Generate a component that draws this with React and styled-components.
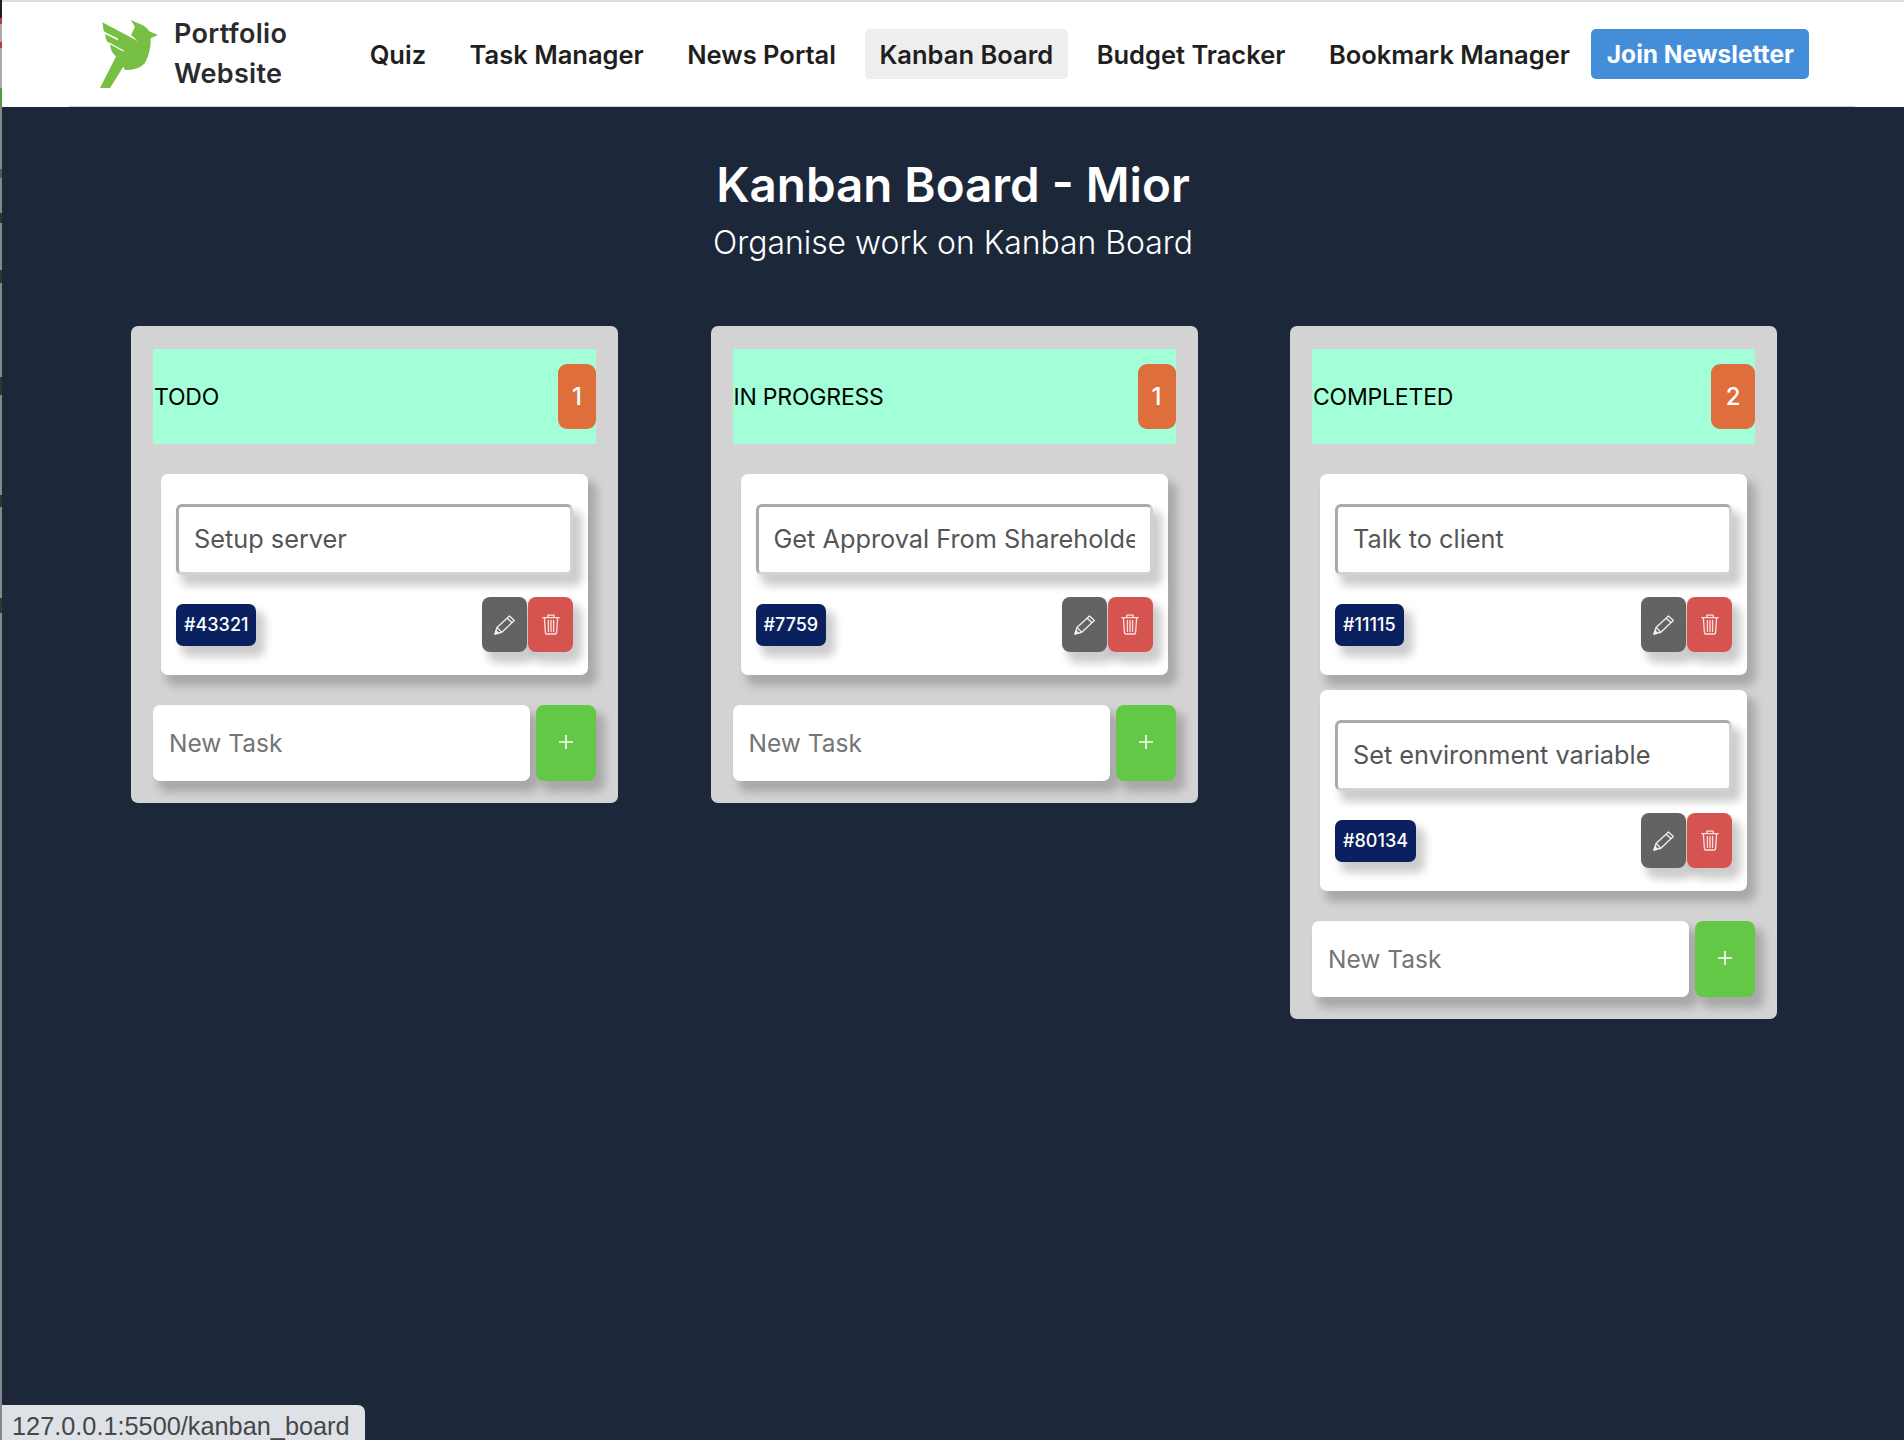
import React from "react";
import styled, { createGlobalStyle } from "styled-components";

const GlobalStyle = createGlobalStyle`
  html, body {
    margin: 0;
    padding: 0;
    background-color: #1c2839;
  }
  * {
    box-sizing: border-box;
  }
`;

const softShadow = "7px 9px 8px 2px rgba(0, 0, 0, 0.2)";

const Shell = styled.div`
  display: flex;
  width: 1904px;
  height: 1440px;
  overflow: hidden;
  font-family: Inter, "Noto Sans", sans-serif;
`;

const EdgeStrip = styled.div`
  flex: 0 0 2px;
  background: linear-gradient(
    to bottom,
    #1d1d22 0 18px,
    #b5403f 18px 24px,
    #a9a9a9 24px 42px,
    #b5403f 42px 48px,
    #a9a9a9 48px 88px,
    #4d9c43 88px 107px,
    #84878c 107px 169px,
    #55575b 169px 178px,
    #84878c 178px 213px,
    #333 213px 223px,
    #84878c 223px 270px,
    #333 270px 283px,
    #84878c 283px 377px,
    #333 377px 395px,
    #84878c 395px 495px,
    #333 495px 507px,
    #84878c 507px 598px,
    #333 598px 613px,
    #84878c 613px
  );
`;

const Main = styled.div`
  flex: 1;
  min-width: 0;
`;

const TopBar = styled.header`
  background-color: #fff;
  border-top: 2px solid #dcdcdc;
  height: 107px;
`;

const NavInner = styled.nav`
  display: flex;
  align-items: center;
  height: 100%;
  margin: 0 49px 0 67px;
  padding-left: 31px;
  border-bottom: 1px solid #cfcfcf;
`;

const Brand = styled.div`
  display: flex;
  align-items: center;
  gap: 14px;
  margin-right: 68px;
`;

const BrandName = styled.div`
  font-size: 27px;
  font-weight: 600;
  line-height: 40px;
  color: #2b2a2d;
  letter-spacing: 0.3px;
`;

const NavLinks = styled.ul`
  display: flex;
  align-items: center;
  gap: 14.5px;
  list-style: none;
  margin: 0;
  padding: 0;
`;

const NavItem = styled.li`
  height: 50px;
  padding: 0 14.5px;
  display: flex;
  align-items: center;
  border-radius: 5px;
  font-size: 25.5px;
  font-weight: 600;
  color: #1f1e20;
  white-space: nowrap;
  background-color: ${(p) => (p.$active ? "#eeeeee" : "transparent")};
`;

const JoinButton = styled.button`
  height: 50px;
  width: 218px;
  margin-left: 7px;
  padding: 0;
  border: none;
  border-radius: 5px;
  background-color: #448ed9;
  color: #fff;
  font-family: inherit;
  font-size: 24.5px;
  font-weight: 700;
  white-space: nowrap;
`;

const Heading = styled.div`
  text-align: center;
  color: #fff;
  padding-top: 49px;
`;

const Title = styled.h1`
  margin: 0;
  font-size: 47.5px;
  font-weight: 600;
  line-height: 58px;
`;

const Subtitle = styled.p`
  margin: 9px 0 0;
  font-size: 31.9px;
  font-weight: 300;
  line-height: 40px;
`;

const Board = styled.div`
  display: flex;
  align-items: flex-start;
  justify-content: center;
  gap: 92.5px;
  margin-top: 63px;
  padding-left: 2px;
`;

const Column = styled.section`
  width: 487px;
  padding: 23px 22px 22px;
  background-color: #d3d3d3;
  border-radius: 7px;
`;

const ColumnHeader = styled.div`
  display: flex;
  align-items: center;
  justify-content: space-between;
  height: 95px;
  padding-left: 1px;
  background-color: #a2ffd7;
  font-size: 23px;
  letter-spacing: -0.2px;
  color: #000;
`;

const Count = styled.span`
  display: flex;
  align-items: center;
  justify-content: center;
  width: ${(p) => (p.$wide ? "44px" : "38px")};
  height: 65px;
  border-radius: 9px;
  background-color: #de6e3b;
  color: #fff;
  font-size: 24px;
  font-weight: 500;
`;

const CardList = styled.div`
  display: flex;
  flex-direction: column;
  gap: 15px;
  margin: 30px 8px;
`;

const Card = styled.article`
  padding: 30px 15px 23px;
  background-color: #fff;
  border-radius: 7px;
  box-shadow: ${softShadow};
`;

const TaskInput = styled.input`
  display: block;
  width: 100%;
  height: 71px;
  padding: 0 15px 2px;
  border-width: 3px;
  border-style: solid;
  border-color: #a9a9a9 #d2d2d2 #d2d2d2 #a9a9a9;
  border-radius: 6px;
  outline: none;
  font-family: inherit;
  font-size: 25.3px;
  color: #555;
  box-shadow: ${softShadow};
`;

const CardFooter = styled.div`
  display: flex;
  align-items: center;
  justify-content: space-between;
  margin-top: 22px;
`;

const Tag = styled.span`
  display: flex;
  align-items: center;
  height: 42px;
  padding: 0 8px;
  border-radius: 7px;
  background-color: #0a205f;
  color: #fff;
  font-size: 18px;
  font-weight: 500;
  box-shadow: ${softShadow};
`;

const Actions = styled.div`
  display: flex;
  gap: 1px;
`;

const IconButton = styled.button`
  display: flex;
  align-items: center;
  justify-content: center;
  width: 45px;
  height: 55px;
  padding: 0;
  border: none;
  border-radius: 8px;
  background-color: ${(p) => (p.$danger ? "#d65450" : "#636363")};
  box-shadow: ${softShadow};
`;

const NewTaskForm = styled.form`
  display: flex;
  gap: 6px;
`;

const NewTaskInput = styled.input`
  flex: 1;
  min-width: 0;
  height: 76px;
  padding: 0 16px;
  border: none;
  border-radius: 7px;
  outline: none;
  font-family: inherit;
  font-size: 24.5px;
  color: #555;
  box-shadow: ${softShadow};

  &::placeholder {
    color: #757575;
  }
`;

const AddButton = styled.button`
  display: flex;
  align-items: center;
  justify-content: center;
  width: 60px;
  height: 76px;
  padding: 0 0 3px;
  border: none;
  border-radius: 8px;
  background-color: #63c846;
  box-shadow: ${softShadow};
`;

const StatusBubble = styled.div`
  position: fixed;
  left: 2px;
  bottom: 0;
  height: 35px;
  padding: 5px 15px 0 10px;
  border-top-right-radius: 7px;
  background-color: #dee1e6;
  color: #45474b;
  font-family: "Liberation Sans", Arial, sans-serif;
  font-size: 25.3px;
  line-height: 32px;
`;

const BirdLogo = () => (
  <svg width="60" height="70" viewBox="100 19 60 70">
    <path
      fill="#78c043"
      d="M130.7 20 L140 24 Q146 26 149.5 31.5 L158 35 L150.7 38.3 Q151 52 145 63 Q139 70.5 125 70 L123.3 66.7 L110 88 L100 88 L116 56.5 L112 52 Q110 48 110 43.5 L107 41.5 Q105 37 105 33 L103.5 30 L102.3 22.3 L137.7 41 L131 35 L135 27 Z"
    />
    <path stroke="#fff" strokeWidth="1.4" fill="none" d="M104 32.5 L118 39.5 M109 43 L123.5 51" />
  </svg>
);

const PencilIcon = () => (
  <svg width="21" height="20" viewBox="0 0 21 20" fill="none" stroke="#f0f0f0" strokeWidth="1.3" strokeLinejoin="round">
    <path d="M1 19 L3 12.5 L15.5 1 L20.3 5.5 L7.8 17.3 Z" />
    <path d="M3 12.5 L7.8 17.3 M13.2 3.2 L18 7.7" />
    <path d="M1 19 L2 15.7 L4.5 18 Z" fill="#f0f0f0" />
  </svg>
);

const TrashIcon = () => (
  <svg width="18" height="21" viewBox="0 0 18 21" fill="none" stroke="#f8e2e1" strokeWidth="1.3" strokeLinecap="round">
    <path d="M6 3 V1.2 H12 V3" />
    <path d="M0.8 3.6 H17.2" />
    <path d="M2.4 4 L3.4 18.6 Q3.5 20 4.8 20 H13.2 Q14.5 20 14.6 18.6 L15.6 4" />
    <path d="M6.4 6.5 V17.5 M9 6.5 V17.5 M11.6 6.5 V17.5" />
  </svg>
);

const PlusIcon = () => (
  <svg width="16" height="16" viewBox="0 0 16 16" stroke="#fff" strokeWidth="1.6">
    <path d="M8 1 V15 M1 8 H15" />
  </svg>
);

const columns = [
  { title: "TODO", tasks: [{ name: "Setup server", id: "#43321" }] },
  { title: "IN PROGRESS", tasks: [{ name: "Get Approval From Shareholders", id: "#7759" }] },
  {
    title: "COMPLETED",
    tasks: [
      { name: "Talk to client", id: "#11115" },
      { name: "Set environment variable", id: "#80134" },
    ],
  },
];

const links = ["Quiz", "Task Manager", "News Portal", "Kanban Board", "Budget Tracker", "Bookmark Manager"];

export default function App() {
  return (
    <>
      <GlobalStyle />
      <Shell>
        <EdgeStrip />
        <Main>
          <TopBar>
            <NavInner>
              <Brand>
                <BirdLogo />
                <BrandName>
                  Portfolio
                  <br />
                  Website
                </BrandName>
              </Brand>
              <NavLinks>
                {links.map((link) => (
                  <NavItem key={link} $active={link === "Kanban Board"}>
                    {link}
                  </NavItem>
                ))}
              </NavLinks>
              <JoinButton>Join Newsletter</JoinButton>
            </NavInner>
          </TopBar>
          <Heading>
            <Title>Kanban Board - Mior</Title>
            <Subtitle>Organise work on Kanban Board</Subtitle>
          </Heading>
          <Board>
            {columns.map((column) => (
              <Column key={column.title}>
                <ColumnHeader>
                  {column.title}
                  <Count $wide={column.tasks.length > 1}>{column.tasks.length}</Count>
                </ColumnHeader>
                <CardList>
                  {column.tasks.map((task) => (
                    <Card key={task.id}>
                      <TaskInput readOnly defaultValue={task.name} />
                      <CardFooter>
                        <Tag>{task.id}</Tag>
                        <Actions>
                          <IconButton type="button">
                            <PencilIcon />
                          </IconButton>
                          <IconButton type="button" $danger>
                            <TrashIcon />
                          </IconButton>
                        </Actions>
                      </CardFooter>
                    </Card>
                  ))}
                </CardList>
                <NewTaskForm>
                  <NewTaskInput placeholder="New Task" />
                  <AddButton type="button">
                    <PlusIcon />
                  </AddButton>
                </NewTaskForm>
              </Column>
            ))}
          </Board>
        </Main>
        <StatusBubble>127.0.0.1:5500/kanban_board</StatusBubble>
      </Shell>
    </>
  );
}
